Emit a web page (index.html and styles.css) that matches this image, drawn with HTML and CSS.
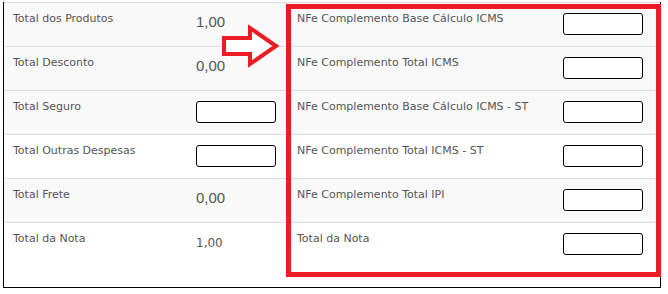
FILE: index.html
```html
<!DOCTYPE html>
<html lang="pt-BR">
<head>
<meta charset="utf-8">
<title>Totais</title>
<link rel="stylesheet" href="styles.css">
</head>
<body>
<div class="panel">
  <div class="row shade">
    <div class="cell left"><span class="label">Total dos Produtos</span><span class="value big">1,00</span></div>
    <div class="cell right"><span class="label">NFe Complemento Base Cálculo ICMS</span><input class="field" type="text"></div>
  </div>
  <div class="row shade">
    <div class="cell left"><span class="label">Total Desconto</span><span class="value big">0,00</span></div>
    <div class="cell right"><span class="label">NFe Complemento Total ICMS</span><input class="field" type="text"></div>
  </div>
  <div class="row shade">
    <div class="cell left"><span class="label">Total Seguro</span><input class="field" type="text"></div>
    <div class="cell right"><span class="label">NFe Complemento Base Cálculo ICMS - ST</span><input class="field" type="text"></div>
  </div>
  <div class="row">
    <div class="cell left"><span class="label">Total Outras Despesas</span><input class="field" type="text"></div>
    <div class="cell right"><span class="label">NFe Complemento Total ICMS - ST</span><input class="field" type="text"></div>
  </div>
  <div class="row shade">
    <div class="cell left"><span class="label">Total Frete</span><span class="value big">0,00</span></div>
    <div class="cell right"><span class="label">NFe Complemento Total IPI</span><input class="field" type="text"></div>
  </div>
  <div class="row last">
    <div class="cell left"><span class="label">Total da Nota</span><span class="value small">1,00</span></div>
    <div class="cell right"><span class="label">Total da Nota</span><input class="field" type="text"></div>
  </div>
  <div class="highlight"></div>
  <svg class="arrow" width="64" height="52" viewBox="218 20 64 52" aria-hidden="true">
    <polygon points="224,38 250,38 250,28 276,46 250,64 250,54 224,54" fill="#ffffff" stroke="#ed1c24" stroke-width="4" stroke-linejoin="miter"/>
  </svg>
</div>
</body>
</html>
```

FILE: styles.css
```css
html, body {
  margin: 0;
  padding: 0;
  background: #ffffff;
}

.panel {
  position: relative;
  margin: 2px 0 0 3px;
  width: 656px;
  border: 1px solid #000000;
  border-top: none;
  font-family: "DejaVu Sans", Verdana, sans-serif;
  font-size: 11px;
  color: #555555;
}

.row {
  display: flex;
  height: 43px;
  border-top: 1px solid #dddddd;
  background: #ffffff;
}

.row.shade {
  background: #f9f9f9;
}

.row.last {
  height: 64px;
}

.cell {
  display: flex;
  align-items: flex-start;
}

.cell.left {
  width: 282px;
  padding-left: 9px;
  box-sizing: border-box;
}

.cell.right {
  flex: 1;
  padding-left: 11px;
  padding-right: 17px;
}

.label {
  display: block;
  line-height: 14px;
  margin-top: 9px;
}

.cell.left .label {
  width: 183px;
  flex: none;
}

.cell.right .label {
  flex: 1;
}

.value.big {
  font-family: "Liberation Sans", Arial, sans-serif;
  font-size: 15px;
  line-height: 18px;
  margin-top: 10px;
}

.value.small {
  font-size: 12px;
  line-height: 14px;
  margin-top: 13px;
}

.field {
  box-sizing: border-box;
  width: 80px;
  height: 22px;
  margin: 10px 0 0 0;
  padding: 0 4px;
  border: 1px solid #000000;
  border-radius: 3px;
  background: #ffffff;
  font: inherit;
  flex: none;
}

.highlight {
  position: absolute;
  left: 282px;
  top: 2px;
  width: 375px;
  height: 273px;
  box-sizing: border-box;
  border: 5px solid #ed1c24;
  pointer-events: none;
}

.arrow {
  position: absolute;
  left: 214px;
  top: 18px;
  overflow: visible;
}
```
